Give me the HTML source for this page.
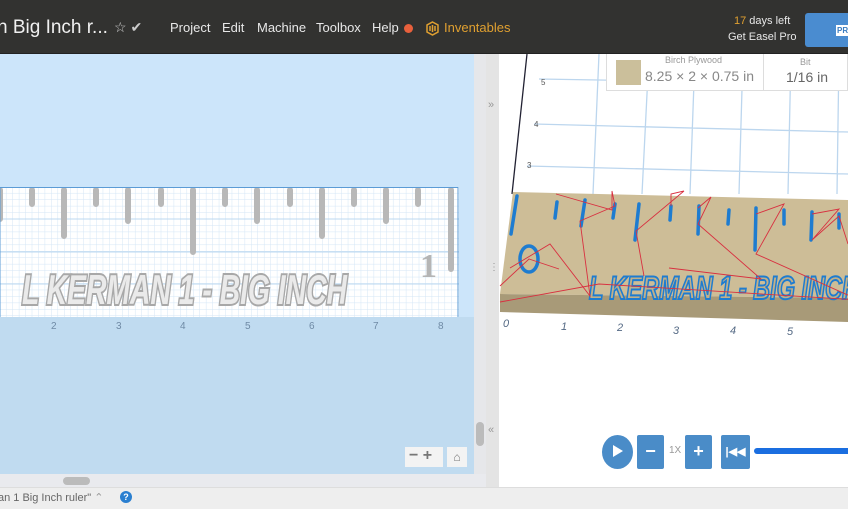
<!DOCTYPE html>
<html><head><meta charset="utf-8"><style>
*{margin:0;padding:0;box-sizing:border-box}
body{width:848px;height:509px;overflow:hidden;font-family:"Liberation Sans",sans-serif;position:relative;background:#fff}
.hdr{position:absolute;left:0;top:0;width:848px;height:54px;background:#323230;border-bottom:1px solid #222}
.hdr span{position:absolute;color:#e8e8e8;font-size:13px;top:20px}
.left{position:absolute;left:0;top:54px;width:474px;height:420px;background:#cce5fa}
.below{position:absolute;left:0;top:317px;width:474px;height:157px;background:#c0dbf0}
.hs{position:absolute;left:0;top:474px;width:486px;height:13px;background:#e9eaee}
.vs{position:absolute;left:474px;top:54px;width:12px;height:420px;background:#e6e7ea}
.div{position:absolute;left:486px;top:54px;width:13px;height:433px;background:#e4e4e4}
.bot{position:absolute;left:0;top:487px;width:848px;height:22px;background:#eeeeee;border-top:1px solid #ddd}
.btn{position:absolute;background:#4a8cc8;border-radius:2px;color:#fff;text-align:center;font-weight:bold}
</style></head><body>
<div class="hdr">
<span style="left:-3px;top:17px;font-size:19px;color:#f0f0f0">n Big Inch r...</span>
<span style="left:114px;top:19px;font-size:14px;color:#ccc">☆ ✔</span>
<span style="left:170px">Project</span>
<span style="left:222px">Edit</span>
<span style="left:257px">Machine</span>
<span style="left:316px">Toolbox</span>
<span style="left:372px">Help</span>
<div style="position:absolute;left:404px;top:24px;width:9px;height:9px;border-radius:50%;background:#e8603c"></div>
<svg style="position:absolute;left:426px;top:21px" width="13" height="15" viewBox="0 0 13 15"><path d="M6.5 1 L12 4 L12 11 L6.5 14 L1 11 L1 4Z M4 5 L4 10 M6.5 4 L6.5 11 M9 5 L9 10" fill="none" stroke="#e0a030" stroke-width="1.5"/></svg>
<span style="left:444px;color:#e0a030">Inventables</span>
<span style="left:734px;top:15px;font-size:11px"><b style="color:#e0a030;font-weight:normal">17</b> days left</span>
<span style="left:728px;top:31px;font-size:11px">Get Easel Pro</span>
<div style="position:absolute;left:805px;top:13px;width:50px;height:34px;background:#4a8cd0;border-radius:3px"></div>
<div style="position:absolute;left:836px;top:25px;width:14px;height:11px;background:#fff;color:#3a7cc0;font-size:8px;font-weight:bold;line-height:11px;padding-left:1px">PR</div>
</div>

<div class="left"></div>
<svg style="position:absolute;left:0;top:187px" width="459" height="131">
<defs><pattern id="g" width="6.45" height="6.45" patternUnits="userSpaceOnUse"><path d="M6.45 0V6.45H0" fill="none" stroke="#d4e6f6" stroke-width="1"/></pattern></defs>
<rect width="459" height="131" fill="#fff"/><rect width="459" height="131" fill="url(#g)"/>
<path d="M0 32H459M0 65H459M0 97H459" stroke="#bcd8f0"/>
<g stroke="#b8b8b8" stroke-width="6" stroke-linecap="round">
<path d="M0 3V32M32 3V17M64 3V49M96 3V17M128 3V34M161 3V17M193 3V65M225 3V17M257 3V34M290 3V17M322 3V49M354 3V17M386 3V34M418 3V17M451 3V82"/>
</g>
<text x="420" y="90" font-size="34" font-weight="bold" fill="#b5b5b5" font-family="Liberation Serif,serif">1</text>
<text x="22" y="117" font-size="42" font-weight="bold" font-style="italic" fill="#eaeaea" stroke="#a8a8a8" stroke-width="4" paint-order="stroke" font-family="Liberation Sans Narrow,Liberation Sans,sans-serif" textLength="325" lengthAdjust="spacingAndGlyphs">L KERMAN 1 - BIG INCH</text>
<rect x="0" y="0.5" width="458" height="130" fill="none" stroke="#5b9bd5"/>
</svg>
<div class="below"></div>
<div style="position:absolute;top:321px;left:0;width:474px;font-size:10px;color:#6f8aa5">
<span style="position:absolute;left:51px">2</span><span style="position:absolute;left:116px">3</span><span style="position:absolute;left:180px">4</span><span style="position:absolute;left:245px">5</span><span style="position:absolute;left:309px">6</span><span style="position:absolute;left:373px">7</span><span style="position:absolute;left:438px">8</span></div>
<div style="position:absolute;left:405px;top:447px;width:38px;height:20px;background:#f3f3f3;color:#777;font-weight:bold;font-size:16px;line-height:18px;padding-left:4px">− +</div>
<div style="position:absolute;left:447px;top:447px;width:20px;height:20px;background:#f3f3f3;color:#777;font-size:12px;text-align:center;line-height:20px">⌂</div>
<div class="vs"></div>
<div style="position:absolute;left:476px;top:422px;width:8px;height:24px;background:#bbb;border-radius:4px"></div>
<div class="hs"></div>
<div style="position:absolute;left:63px;top:477px;width:27px;height:8px;background:#bbb;border-radius:4px"></div>
<div class="div"></div>
<span style="position:absolute;left:488px;top:99px;font-size:11px;color:#999">»</span>
<span style="position:absolute;left:488px;top:424px;font-size:11px;color:#999">«</span>
<span style="position:absolute;left:489px;top:262px;font-size:10px;color:#999">⋮</span>

<svg style="position:absolute;left:499px;top:54px" width="349" height="433">
<g stroke="#bcd6ee" stroke-width="1.3" fill="none">
<path d="M40 25L160 27M35 70L349 78M28 112L349 120M150 0L143 140M196 0L191 140M244 0L240 140M292 0L289 140M340 0L338 140M100 0L94 140"/>
</g>
<path d="M28 0L13 140" stroke="#223" stroke-width="1.3"/>
<text x="42" y="31" font-size="8" fill="#555">5</text><text x="35" y="73" font-size="8" fill="#555">4</text><text x="28" y="114" font-size="8" fill="#555">3</text>
<polygon points="14,138 349,146 349,244 1,240" fill="#cdbd97"/>
<polygon points="1,240 349,244 349,268 1,258" fill="#a89a78"/>
<g stroke="#1e7cd0" stroke-width="3.5" fill="none" stroke-linecap="round">
<path d="M18 142L12 180M58 148L56 164M86 146L82 172M116 150L114 164M140 150L136 186M172 152L171 166M200 152L199 180M230 156L229 170M257 154L256 196M285 156L285 170M313 158L312 186M340 160L340 174"/>
<ellipse cx="30" cy="205" rx="9" ry="13"/>
</g>
<text x="90" y="245" font-size="32" font-weight="bold" font-style="italic" fill="#c0b08a" stroke="#1e7cd0" stroke-width="2" textLength="270" lengthAdjust="spacingAndGlyphs">L KERMAN 1 - BIG INCH</text>
<g stroke="#d83040" stroke-width="0.9" fill="none">
<path d="M57 140L113 156L113 137L116 152L81 167L91 242L51 190L11 214M172 152L172 140L185 137L137 177L145 222M199 154L212 143L199 170L262 225L170 214M257 160L285 150L257 200L360 246L100 230L1 248M313 160L340 155L313 186L340 162L349 190M1 232L30 205L60 215"/>
</g>
<g font-size="11" fill="#556a85" font-style="italic"><text x="4" y="273">0</text><text x="62" y="276">1</text><text x="118" y="277">2</text><text x="174" y="280">3</text><text x="231" y="280">4</text><text x="288" y="281">5</text></g>
<path d="M258 397H349" stroke="#1a6ee0" stroke-width="6" stroke-linecap="round"/>
</svg>
<div style="position:absolute;left:606px;top:54px;width:242px;height:37px;background:#fff;border:1px solid #ddd;border-top:none"></div>
<div style="position:absolute;left:616px;top:60px;width:25px;height:25px;background:#cbbf9b"></div>
<span style="position:absolute;left:665px;top:55px;font-size:9px;color:#999">Birch Plywood</span>
<span style="position:absolute;left:645px;top:68px;font-size:14px;color:#888">8.25 × 2 × 0.75 in</span>
<div style="position:absolute;left:763px;top:54px;width:1px;height:37px;background:#ddd"></div>
<span style="position:absolute;left:800px;top:57px;font-size:9px;color:#999">Bit</span>
<span style="position:absolute;left:786px;top:69px;font-size:14px;color:#666">1/16 in</span>

<div style="position:absolute;left:602px;top:435px;width:31px;height:34px;border-radius:50%;background:#4a8cc8"></div>
<div style="position:absolute;left:613px;top:445px;width:0;height:0;border-left:10px solid #fff;border-top:6px solid transparent;border-bottom:6px solid transparent"></div>
<div class="btn" style="left:637px;top:435px;width:27px;height:34px;font-size:18px;line-height:32px">−</div>
<span style="position:absolute;left:669px;top:445px;font-size:10px;color:#999">1X</span>
<div class="btn" style="left:685px;top:435px;width:27px;height:34px;font-size:18px;line-height:32px">+</div>
<div class="btn" style="left:721px;top:435px;width:29px;height:34px;font-size:11px;line-height:34px">|◀◀</div>

<div class="bot"><span style="position:absolute;left:-2px;top:3px;font-size:11px;color:#666">an 1 Big Inch ruler" <span style="color:#999">⌃</span></span>
<div style="position:absolute;left:120px;top:3px;width:12px;height:12px;border-radius:50%;background:#2a7fd0;color:#fff;font-size:9px;font-weight:bold;text-align:center;line-height:12px">?</div></div>
</body></html>
